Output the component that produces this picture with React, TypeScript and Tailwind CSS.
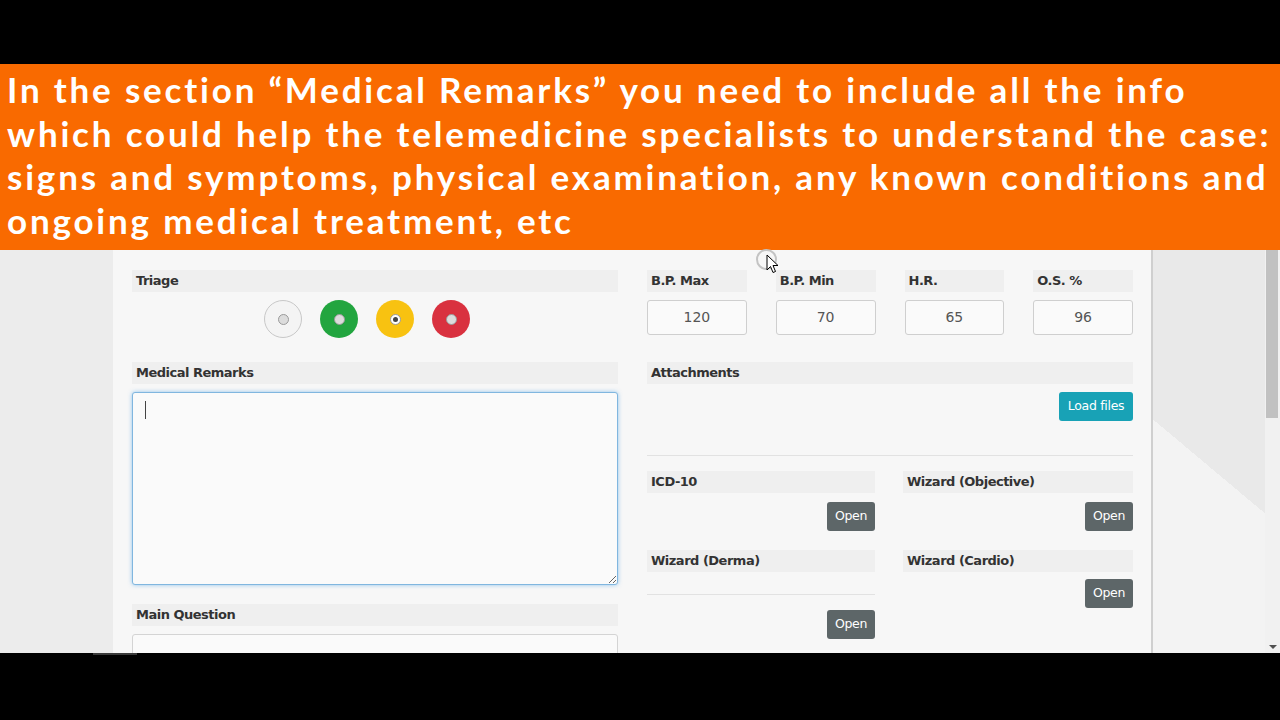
import React from 'react';

const labelFont = { fontFamily: '"DejaVu Sans", Verdana, sans-serif' };

function Label({ children, className = '' }: { children: React.ReactNode; className?: string }) {
    return (
        <div className={`h-[22px] shrink-0 bg-[#efefef] px-1 flex items-center text-[13px] font-bold tracking-[-0.5px] text-[#333] ${className}`} style={labelFont}>
            {children}
        </div>
    );
}

function TriageDot({ color, ring, checked }: { color: string; ring: string; checked?: boolean }) {
    return (
        <div className={`w-[38px] h-[38px] rounded-full flex items-center justify-center ${color} ${ring}`}>
            <div className={`w-[11px] h-[11px] rounded-full border border-[#9a9a9a] flex items-center justify-center ${checked ? 'bg-white' : 'bg-[#dcdcdc]'}`}>
                {checked && <div className="w-[5px] h-[5px] rounded-full bg-[#444]" />}
            </div>
        </div>
    );
}

function OpenButton({ className = '' }: { className?: string }) {
    return (
        <button className={`self-end shrink-0 h-[29px] w-[48px] rounded-[3px] bg-[#5d6668] text-white text-[12.5px] tracking-[-0.3px] ${className}`} style={labelFont}>
            Open
        </button>
    );
}

export default function App() {
    const vitals = [
        { label: 'B.P. Max', value: '120' },
        { label: 'B.P. Min', value: '70' },
        { label: 'H.R.', value: '65' },
        { label: 'O.S. %', value: '96' },
    ];

    return (
        <div className="w-[1280px] h-[720px] bg-black flex flex-col overflow-hidden relative">
            <div className="h-16 shrink-0" />

            {/* Caption banner */}
            <div className="h-[186px] shrink-0 bg-[#f96a00] pl-[7px] pt-[4px]">
                <p className="text-white font-bold text-[35px] leading-[43.5px] tracking-[2.8px] whitespace-nowrap" style={{ fontFamily: 'Lato, "Open Sans", sans-serif' }}>
                    In the section “Medical Remarks” you need to include all the info<br />
                    which could help the telemedicine specialists to understand the case:<br />
                    signs and symptoms, physical examination, any known conditions and<br />
                    ongoing medical treatment, etc
                </p>
            </div>

            {/* Browser page */}
            <div className="h-[403px] shrink-0 flex">
                <div className="w-[113px] bg-[#ececec]" />

                <div className="w-[1040px] bg-[#f7f7f7] border-r-2 border-[#cfcfcf] pl-[19px] pr-[18px] pt-5 flex items-start gap-[29px] overflow-hidden">
                    {/* Left column */}
                    <div className="w-[486px] flex flex-col">
                        <Label>Triage</Label>
                        <div className="mt-2 pl-[132px] flex gap-[18px]">
                            <TriageDot color="bg-[#f4f4f4]" ring="border border-[#c8c8c8]" />
                            <TriageDot color="bg-[#22a53f]" ring="" />
                            <TriageDot color="bg-[#f8c211]" ring="" checked />
                            <TriageDot color="bg-[#d9313f]" ring="" />
                        </div>

                        <Label className="mt-6">Medical Remarks</Label>
                        <div className="relative mt-2">
                            <textarea
                                className="block w-full h-[193px] rounded-[3px] border border-[#80b6df] bg-[#fafafa] shadow-[0_0_4px_rgba(102,175,233,0.7)] outline-none"
                                readOnly
                            />
                            <div className="absolute left-[13px] top-[9px] w-px h-[18px] bg-[#444]" />
                        </div>

                        <Label className="mt-[19px]">Main Question</Label>
                        <div className="mt-2 h-[35px] rounded-[3px] border border-[#d4d4d4] bg-[#fafafa]" />
                    </div>

                    {/* Right column */}
                    <div className="w-[486px] flex flex-col">
                        <div className="grid grid-cols-4 gap-x-[29px]">
                            {vitals.map(v => (
                                <div key={v.label} className="flex flex-col">
                                    <Label>{v.label}</Label>
                                    <div className="mt-2 h-[35px] rounded-[3px] border border-[#cfcfcf] bg-[#fafafa] flex items-center justify-center text-[14px] text-[#555]" style={labelFont}>
                                        {v.value}
                                    </div>
                                </div>
                            ))}
                        </div>

                        <Label className="mt-[27px]">Attachments</Label>
                        <button className="self-end mt-2 h-[29px] w-[74px] rounded-[3px] bg-[#18a2b6] text-white text-[12.5px] tracking-[-0.3px]" style={labelFont}>
                            Load files
                        </button>
                        <div className="mt-[34px] border-t border-[#e2e2e2]" />

                        <div className="mt-[15px] grid grid-cols-[228px_230px] gap-x-[28px]">
                            <div className="flex flex-col">
                                <Label>ICD-10</Label>
                                <OpenButton className="mt-[9px]" />
                                <Label className="mt-[19px]">Wizard (Derma)</Label>
                                <div className="mt-[22px] border-t border-[#e2e2e2]" />
                                <OpenButton className="mt-[15px]" />
                            </div>
                            <div className="flex flex-col">
                                <Label>Wizard (Objective)</Label>
                                <OpenButton className="mt-[9px]" />
                                <Label className="mt-[19px]">Wizard (Cardio)</Label>
                                <OpenButton className="mt-[7px]" />
                            </div>
                        </div>
                    </div>
                </div>

                <div className="w-[112px] bg-[linear-gradient(220deg,#e9e9e9_53%,#f3f3f3_53%)]" />

                {/* Scrollbar */}
                <div className="w-[15px] bg-[#f1f1f1] flex flex-col">
                    <div className="ml-[1px] w-[12px] h-[168px] bg-[#c1c1c1]" />
                    <div className="flex-1" />
                    <div className="h-[12px] flex items-center justify-center">
                        <div className="w-0 h-0 border-l-[4px] border-r-[4px] border-t-[4px] border-l-transparent border-r-transparent border-t-[#505050]" />
                    </div>
                </div>
            </div>

            <div className="flex-1 relative">
                <div className="absolute left-[93px] top-0 w-[44px] h-[2px] bg-[#3a3a3a]" />
            </div>

            {/* Mouse pointer with click ring */}
            <div className="absolute left-[756px] top-[249px] w-[21px] h-[21px] rounded-full border-2 border-[#c4c4c4]" />
            <svg className="absolute left-[766px] top-[254px]" width="13" height="20" viewBox="0 0 13 20">
                <path d="M1 1 L1 16 L4.5 12.5 L7 18.5 L9.5 17.5 L7 11.5 L12 11.5 Z" fill="white" stroke="black" strokeWidth="1" strokeLinejoin="round" />
            </svg>
        </div>
    );
}
